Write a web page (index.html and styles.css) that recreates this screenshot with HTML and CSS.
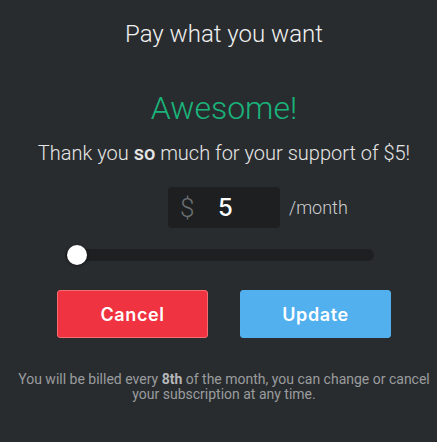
FILE: index.html
```html
<!DOCTYPE html>
<html>
<head>
<meta charset="utf-8">
<link rel="stylesheet" href="styles.css">
</head>
<body>
<div class="page">
  <h1 class="title">Pay what you want</h1>
  <h2 class="awesome">Awesome!</h2>
  <p class="thanks">Thank you <b>so</b> much for your support of $5!</p>
  <div class="amount-row">
    <div class="spacer"></div>
    <div class="amount">
      <span class="currency">$</span>
      <span class="value">5</span>
    </div>
    <div class="per">/month</div>
  </div>
  <div class="slider">
    <div class="thumb"></div>
  </div>
  <div class="buttons">
    <button class="btn cancel">Cancel</button>
    <button class="btn update">Update</button>
  </div>
  <p class="footer">You will be billed every <b>8th</b> of the month, you can change or cancel your subscription at any time.</p>
</div>
</body>
</html>
```
FILE: styles.css
```css
html, body {
  margin: 0;
  padding: 0;
  background: #292c2f;
}
.page {
  width: 426px;
  height: 442px;
  padding-left: 11px;
  font-family: Roboto, "Liberation Sans", sans-serif;
  text-align: center;
  color: #f1f1f1;
  overflow: hidden;
}
.title {
  margin: 20px 0 0;
  font-size: 24px;
  line-height: 28px;
  font-weight: 300;
}
.awesome {
  margin: 41px 0 0;
  font-size: 32px;
  line-height: 38px;
  font-weight: 300;
  color: #19b47b;
}
.thanks {
  margin: 15px 0 0;
  font-size: 20px;
  line-height: 22px;
  font-weight: 300;
  color: #e6e6e6;
}
.thanks b {
  font-weight: 500;
}
.amount-row {
  margin-top: 23px;
  display: grid;
  grid-template-columns: 1fr auto 1fr;
  align-items: center;
}
.amount {
  width: 112px;
  height: 41px;
  box-sizing: border-box;
  background: #1d1f21;
  border-radius: 4px;
  display: flex;
  align-items: center;
  padding-left: 12px;
}
.currency {
  font-size: 26px;
  font-weight: 300;
  color: #6c7073;
  width: 38px;
  text-align: left;
}
.value {
  font-family: Inter, sans-serif;
  font-size: 24px;
  font-weight: 500;
  color: #ffffff;
}
.per {
  text-align: left;
  padding-left: 9px;
  font-size: 18px;
  font-weight: 300;
  color: #cfcfcf;
}
.slider {
  position: relative;
  margin: 21px 63px 0 54px;
  height: 12px;
  border-radius: 6px;
  background: #1d1f21;
}
.thumb {
  position: absolute;
  left: 2px;
  top: -4px;
  width: 20px;
  height: 20px;
  border-radius: 50%;
  background: #ffffff;
  box-shadow: 0 1px 3px rgba(0, 0, 0, 0.5);
}
.buttons {
  margin-top: 29px;
  display: flex;
  justify-content: center;
  gap: 32px;
}
.btn {
  width: 151px;
  height: 48px;
  border-radius: 3px;
  font-family: Inter, sans-serif;
  font-size: 18px;
  font-weight: 600;
  letter-spacing: 0.6px;
  color: #ffffff;
  cursor: pointer;
}
.cancel {
  background: #ef3340;
  border: 1px solid #f56c72;
}
.update {
  background: #52b0ee;
  border: 1px solid #52b0ee;
}
.footer {
  margin: 34px 0 0;
  font-size: 14px;
  line-height: 15px;
  color: #9a9c9e;
}
.footer b {
  font-weight: 700;
  color: #b5b7b9;
}
```
